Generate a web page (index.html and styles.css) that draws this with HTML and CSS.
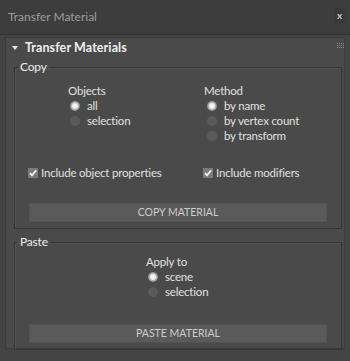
FILE: index.html
```html
<!DOCTYPE html>
<html>
<head>
<meta charset="utf-8">
<link rel="stylesheet" href="styles.css">
</head>
<body>
<div class="window">
  <div class="titlebar">
    <span class="title">Transfer Material</span>
    <span class="close">x</span>
  </div>
  <div class="rollout">
    <div class="rollout-header">
      <span class="tri"></span>
      <span class="rollout-title">Transfer Materials</span>
      <svg class="grip" width="7" height="5" viewBox="0 0 7 5">
        <g fill="#8a8a8a">
          <rect x="0" y="0" width="1" height="1"/><rect x="2" y="0" width="1" height="1"/><rect x="4" y="0" width="1" height="1"/><rect x="6" y="0" width="1" height="1"/>
          <rect x="0" y="2" width="1" height="1"/><rect x="2" y="2" width="1" height="1"/><rect x="4" y="2" width="1" height="1"/><rect x="6" y="2" width="1" height="1"/>
          <rect x="0" y="4" width="1" height="1"/><rect x="2" y="4" width="1" height="1"/><rect x="4" y="4" width="1" height="1"/><rect x="6" y="4" width="1" height="1"/>
        </g>
      </svg>
    </div>
    <div class="rollout-body">
      <fieldset class="group group-copy">
        <legend>Copy</legend>
        <div class="cols">
          <div class="col col-objects">
            <div class="label">Objects</div>
            <div class="radio on"><span class="dot"></span>all</div>
            <div class="radio"><span class="dot"></span>selection</div>
          </div>
          <div class="col col-method">
            <div class="label">Method</div>
            <div class="radio on"><span class="dot"></span>by name</div>
            <div class="radio"><span class="dot"></span>by vertex count</div>
            <div class="radio"><span class="dot"></span>by transform</div>
          </div>
        </div>
        <div class="checks">
          <div class="check check-a"><span class="box"><svg width="10" height="10" viewBox="0 0 10 10"><path d="M2 5.2 L4 7.4 L8.2 2.2" fill="none" stroke="#f2f2f2" stroke-width="1.8"/></svg></span>Include object properties</div>
          <div class="check check-b"><span class="box"><svg width="10" height="10" viewBox="0 0 10 10"><path d="M2 5.2 L4 7.4 L8.2 2.2" fill="none" stroke="#f2f2f2" stroke-width="1.8"/></svg></span>Include modifiers</div>
        </div>
        <div class="btn btn-copy">COPY MATERIAL</div>
      </fieldset>
      <fieldset class="group group-paste">
        <legend>Paste</legend>
        <div class="col col-apply">
          <div class="label">Apply to</div>
          <div class="radio on"><span class="dot"></span>scene</div>
          <div class="radio"><span class="dot"></span>selection</div>
        </div>
        <div class="btn btn-paste">PASTE MATERIAL</div>
      </fieldset>
    </div>
  </div>
</div>
</body>
</html>
```

FILE: styles.css
```css
html, body {
  margin: 0;
  padding: 0;
  background: #444444;
}
body {
  width: 350px;
  height: 361px;
  overflow: hidden;
  font-family: Lato, "Open Sans", "DejaVu Sans", sans-serif;
  font-size: 11.5px;
  letter-spacing: -0.2px;
  color: #e0e0e0;
}
.titlebar {
  background: #3d3d3d;
  border-bottom: 1px solid #303030;
  display: flex;
  align-items: center;
  justify-content: space-between;
  padding: 0 5px 0 8px;
  box-sizing: border-box;
  height: 35px;
}
.title {
  color: #9c9c9c;
  font-size: 12px;
  letter-spacing: 0;
  margin-top: -1px;
}
.close {
  width: 11px;
  height: 15px;
  background: #383838;
  color: #c8c8c8;
  font-size: 10px;
  line-height: 14px;
  text-align: center;
  font-weight: bold;
  margin-top: -4px;
}
.rollout {
  margin: 2px 5px 0 5px;
  background: #4a4a4a;
  border: 1px solid #3a3a3a;
  height: 312px;
  box-sizing: border-box;
}
.rollout-header {
  height: 18px;
  display: flex;
  align-items: center;
  padding-left: 6px;
}
.tri {
  width: 0;
  height: 0;
  border-left: 3px solid transparent;
  border-right: 3px solid transparent;
  border-top: 4px solid #e8e8e8;
  margin-right: 7px;
  margin-top: 1px;
}
.rollout-title {
  font-weight: bold;
  font-size: 12.5px;
  letter-spacing: 0.1px;
  color: #f0f0f0;
  flex: 1;
}
.grip {
  margin-top: -3px;
}
.rollout-body {
  padding: 0 2px 0 8px;
}
.group {
  margin: 3px 0 0 0;
  padding: 0;
  border: 1px solid #363636;
  box-shadow: inset 1px 1px 0 #525252;
  min-inline-size: 0;
}
legend {
  margin-left: 3px;
  padding: 0 2px;
  line-height: 16px;
  font-size: 12px;
  color: #ececec;
}
.group-paste {
  margin-top: 5px;
}
.cols {
  display: flex;
  padding: 8px 0 0 53px;
}
.col-objects {
  width: 136px;
}
.label, .radio, .check {
  line-height: 15px;
  height: 15px;
  white-space: nowrap;
}
.radio {
  display: flex;
  align-items: center;
  padding-left: 2px;
}
.dot {
  width: 10px;
  height: 10px;
  border-radius: 50%;
  background: #5a5a5a;
  margin-right: 7px;
  flex: none;
}
.radio.on .dot {
  background: radial-gradient(circle, #f4f4f4 0, #f0f0f0 2.4px, #b0b0b0 3.6px, #8a8a8a 5px);
}
.col-method .radio {
  padding-left: 3px;
}
.checks {
  display: flex;
  margin-top: 22px;
  padding-left: 13px;
}
.check {
  display: flex;
  align-items: center;
}
.check-a {
  width: 175px;
}
.box {
  width: 10px;
  height: 10px;
  background: #7a7a7a;
  margin-right: 3px;
  flex: none;
  display: flex;
}
.btn {
  margin: 0 14px;
  height: 19px;
  box-sizing: border-box;
  background: #5a5a5a;
  border: 1px solid #535353;
  border-radius: 1px;
  color: #cccccc;
  font-size: 10.5px;
  letter-spacing: 0;
  line-height: 17px;
  text-align: center;
}
.btn-copy {
  margin-top: 23px;
  margin-bottom: 6px;
}
.col-apply {
  padding: 4px 0 0 131px;
}
.btn-paste {
  margin-top: 25px;
  margin-bottom: 6px;
}
```
